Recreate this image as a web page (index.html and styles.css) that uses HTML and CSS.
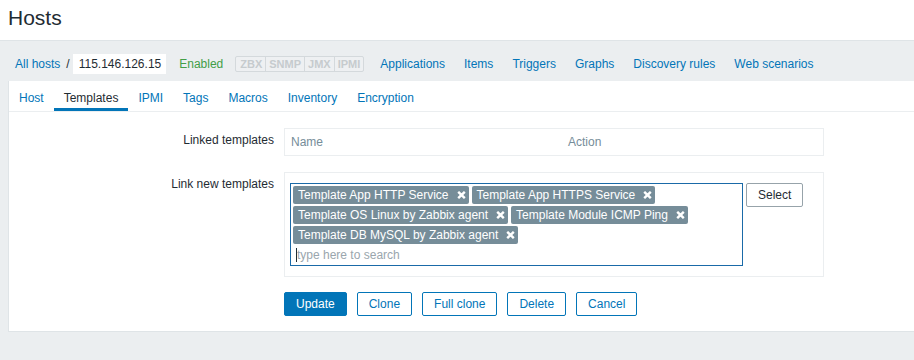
FILE: index.html
```html
<!DOCTYPE html>
<html>
<head>
<meta charset="utf-8">
<link rel="stylesheet" href="styles.css">
</head>
<body>
<header class="page-header">
  <h1 class="page-title">Hosts</h1>
</header>
<nav class="host-nav">
  <a class="link crumb">All hosts</a>
  <span class="crumb-sep">/</span>
  <span class="crumb-current">115.146.126.15</span>
  <span class="status-enabled">Enabled</span>
  <span class="status-box">
    <span class="status-cell">ZBX</span><span class="status-cell">SNMP</span><span class="status-cell">JMX</span><span class="status-cell">IPMI</span>
  </span>
  <a class="link nav-link first">Applications</a>
  <a class="link nav-link">Items</a>
  <a class="link nav-link">Triggers</a>
  <a class="link nav-link">Graphs</a>
  <a class="link nav-link">Discovery rules</a>
  <a class="link nav-link">Web scenarios</a>
</nav>
<main class="panel">
  <ul class="tabs">
    <li class="tab">Host</li>
    <li class="tab active">Templates</li>
    <li class="tab">IPMI</li>
    <li class="tab">Tags</li>
    <li class="tab">Macros</li>
    <li class="tab">Inventory</li>
    <li class="tab">Encryption</li>
  </ul>
  <div class="form">
    <div class="form-label">Linked templates</div>
    <div class="linked-table">
      <div class="th th-name">Name</div>
      <div class="th">Action</div>
    </div>

    <div class="form-label">Link new templates</div>
    <div class="link-box">
      <div class="multiselect">
        <div class="tags">
          <span class="tag">Template App HTTP Service<svg class="tag-x" viewBox="0 0 9 8" width="9" height="8"><path d="M1.2 0.8 L7.8 7.2 M7.8 0.8 L1.2 7.2" stroke="#fff" stroke-width="2.4" fill="none"/></svg></span>
          <span class="tag">Template App HTTPS Service<svg class="tag-x" viewBox="0 0 9 8" width="9" height="8"><path d="M1.2 0.8 L7.8 7.2 M7.8 0.8 L1.2 7.2" stroke="#fff" stroke-width="2.4" fill="none"/></svg></span>
          <span class="tag">Template OS Linux by Zabbix agent<svg class="tag-x" viewBox="0 0 9 8" width="9" height="8"><path d="M1.2 0.8 L7.8 7.2 M7.8 0.8 L1.2 7.2" stroke="#fff" stroke-width="2.4" fill="none"/></svg></span>
          <span class="tag">Template Module ICMP Ping<svg class="tag-x" viewBox="0 0 9 8" width="9" height="8"><path d="M1.2 0.8 L7.8 7.2 M7.8 0.8 L1.2 7.2" stroke="#fff" stroke-width="2.4" fill="none"/></svg></span>
          <span class="tag">Template DB MySQL by Zabbix agent<svg class="tag-x" viewBox="0 0 9 8" width="9" height="8"><path d="M1.2 0.8 L7.8 7.2 M7.8 0.8 L1.2 7.2" stroke="#fff" stroke-width="2.4" fill="none"/></svg></span>
        </div>
        <div class="search"><span class="caret"></span><span class="placeholder">type here to search</span></div>
      </div>
      <button class="btn btn-grey">Select</button>
    </div>

    <div class="form-label"></div>
    <div class="buttons">
      <button class="btn btn-primary">Update</button>
      <button class="btn btn-alt">Clone</button>
      <button class="btn btn-alt">Full clone</button>
      <button class="btn btn-alt">Delete</button>
      <button class="btn btn-alt">Cancel</button>
    </div>
  </div>
</main>
</body>
</html>
```
FILE: styles.css
```css
* { box-sizing: border-box; }
html, body { margin: 0; padding: 0; }
body {
  background: #ebeef0;
  font-family: "Liberation Sans", Arial, sans-serif;
  font-size: 12px;
  color: #1f2c33;
  width: 914px;
  height: 360px;
  overflow: hidden;
}
.page-header {
  background: #fff;
  height: 41px;
  padding: 6px 8px 0;
  border-bottom: 1px solid #dfe4e7;
}
.page-title {
  margin: 0;
  font-size: 21px;
  line-height: 24px;
  font-weight: normal;
  color: #1f2c33;
}
.link { color: #0275b8; text-decoration: none; cursor: pointer; }
.host-nav {
  display: flex;
  align-items: center;
  height: 40px;
  padding: 13px 0 7px 15px;
}
.crumb { line-height: 20px; }
.crumb-sep { margin: 0 3px 0 6px; color: #1f2c33; line-height: 20px; }
.crumb-current {
  background: #fff;
  height: 20px;
  line-height: 20px;
  padding: 0 5px 0 6px;
  font-size: 12px;
  color: #1f2c33;
}
.status-enabled { color: #429e47; margin-left: 13px; }
.status-box {
  display: flex;
  margin-left: 12px;
  border: 1px solid #d4d9dc;
  border-radius: 2px;
  background: #eef0f2;
}
.status-cell {
  font-size: 11px;
  font-weight: bold;
  color: #c6cbce;
  padding: 0 3px;
  line-height: 14px;
  border-left: 1px solid #d4d9dc;
}
.status-cell:first-child { border-left: 0; padding-left: 4px; }
.nav-link { margin-left: 19px; }
.nav-link.first { margin-left: 16px; }

.panel {
  margin-left: 8px;
  background: #fff;
  border-left: 1px solid #dfe4e7;
  border-bottom: 1px solid #dfe4e7;
  padding-bottom: 15px;
}
.tabs {
  list-style: none;
  margin: 0;
  padding: 0;
  display: flex;
  border-bottom: 1px solid #ebeef0;
}
.tab {
  padding: 10px 10px 3px;
  line-height: 14px;
  border-bottom: 3px solid transparent;
  color: #0275b8;
}
.tab.active { color: #1f2c33; border-bottom-color: #0275b8; }

.form {
  display: grid;
  grid-template-columns: 265px 540px;
  column-gap: 10px;
  row-gap: 16px;
  padding-top: 16px;
}
.form-label {
  text-align: right;
  padding-top: 5px;
  line-height: 14px;
}
.linked-table {
  display: grid;
  grid-template-columns: 277px 1fr;
  border: 1px solid #ebeef0;
  height: 28px;
}
.th {
  color: #768d99;
  padding: 6px 6px 0;
  line-height: 14px;
}
.link-box {
  display: flex;
  align-items: flex-start;
  border: 1px solid #ebeef0;
  padding: 10px 5px;
  height: 105px;
}
.multiselect {
  width: 453px;
  height: 83px;
  border: 1px solid #1a6aa8;
  padding: 2px 2px 0;
}
.tags {
  display: flex;
  flex-wrap: wrap;
  gap: 2px 3px;
}
.tag {
  display: inline-flex;
  align-items: center;
  height: 18px;
  background: #768d99;
  color: #fff;
  padding: 0 3px 0 5px;
  border-radius: 2px;
  line-height: 18px;
  white-space: nowrap;
}
.tag-x { margin-left: 8px; display: block; }
.search {
  display: flex;
  align-items: center;
  height: 18px;
  margin-top: 2px;
  padding-left: 3px;
}
.caret {
  width: 1px;
  height: 14px;
  background: #1f2c33;
}
.placeholder { color: #9aa6ad; margin-left: 0; }
.btn {
  font-family: "Liberation Sans", Arial, sans-serif;
  font-size: 12px;
  height: 24px;
  padding: 0 11px;
  border-radius: 2px;
  border: 1px solid #0275b8;
  background: #fff;
  color: #0275b8;
  line-height: 22px;
  margin: 0;
  cursor: pointer;
}
.btn-grey {
  margin-left: 3px;
  border-color: #97a3aa;
  color: #1f2c33;
}
.btn-primary { background: #0275b8; color: #fff; }
.buttons {
  display: flex;
  gap: 10px;
  padding-top: 0;
  margin-top: -1px;
}
```
